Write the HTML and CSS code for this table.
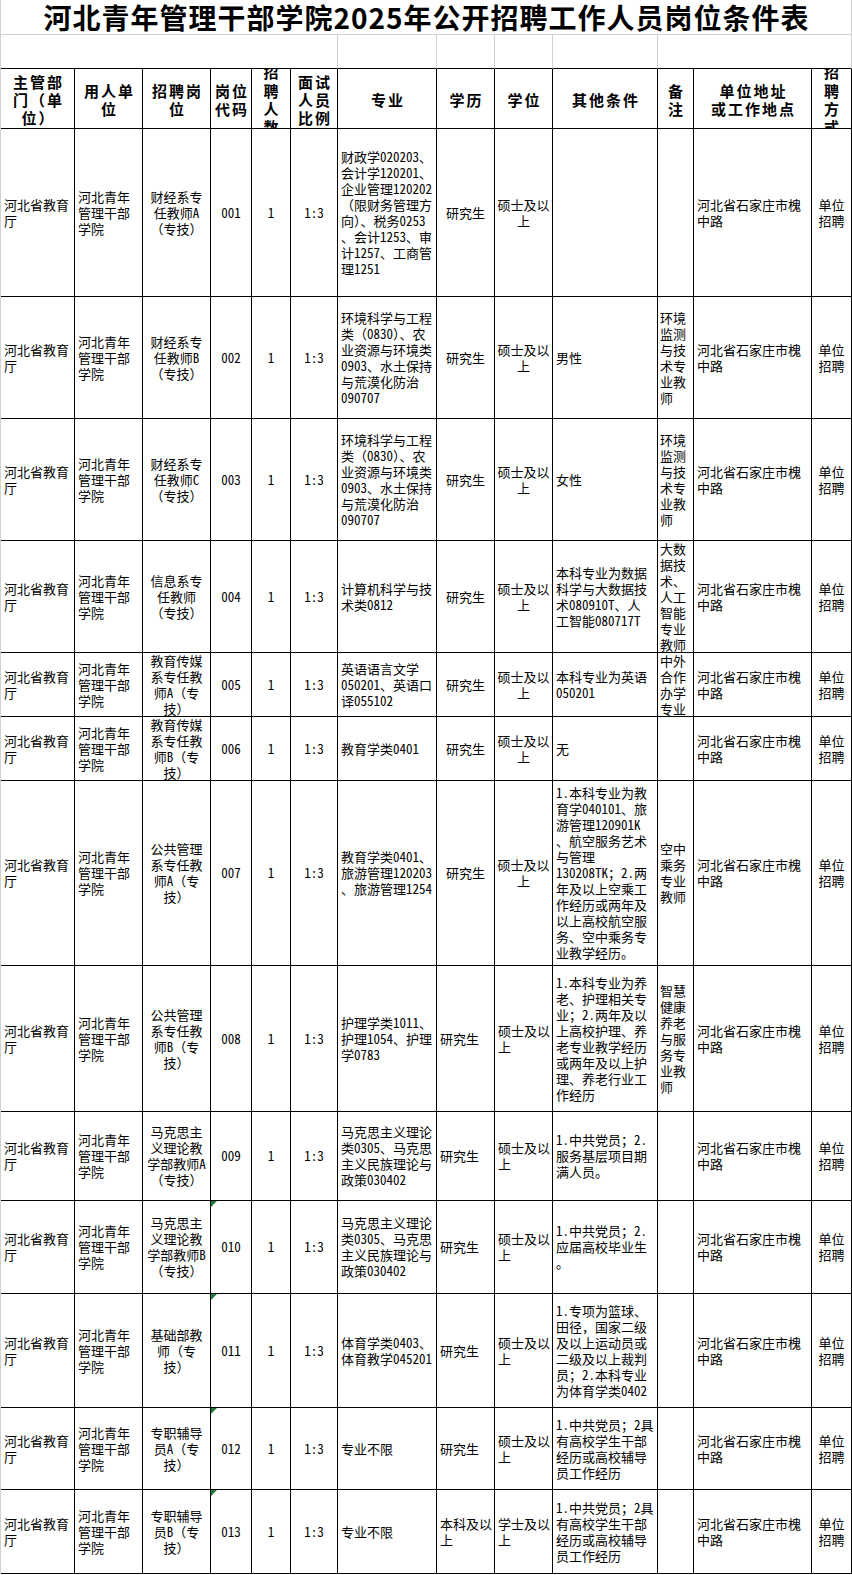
FILE: index.html
```html
<!DOCTYPE html>
<html lang="zh-CN">
<head>
<meta charset="utf-8">
<title>河北青年管理干部学院2025年公开招聘工作人员岗位条件表</title>
<link rel="stylesheet" href="styles.css">
</head>
<body>
<div class="sheet">
  <div class="title">河北青年管理干部学院2025年公开招聘工作人员岗位条件表</div>

  <div class="blank span6"></div>
  <div class="blank"></div>
  <div class="blank"></div>
  <div class="blank"></div>
  <div class="blank"></div>
  <div class="blank span3"></div>

  <div class="c m h"><span>主管部<br>门（单<br>位）</span></div>
  <div class="c m h"><span>用人单<br>位</span></div>
  <div class="c m h"><span>招聘岗<br>位</span></div>
  <div class="c m h"><span>岗位<br>代码</span></div>
  <div class="c m h"><span>招<br>聘<br>人<br>数</span></div>
  <div class="c m h"><span>面试<br>人员<br>比例</span></div>
  <div class="c m h"><span>专业</span></div>
  <div class="c m h"><span>学历</span></div>
  <div class="c m h"><span>学位</span></div>
  <div class="c m h"><span>其他条件</span></div>
  <div class="c m h"><span>备<br>注</span></div>
  <div class="c m h"><span>单位地址<br>或工作地点</span></div>
  <div class="c m h"><span>招<br>聘<br>方<br>式</span></div>

  <!-- 001 -->
  <div class="c"><span>河北省教育<br>厅</span></div>
  <div class="c"><span>河北青年<br>管理干部<br>学院</span></div>
  <div class="c m"><span>财经系专<br>任教师A<br>（专技）</span></div>
  <div class="c m"><span>001</span></div>
  <div class="c m"><span>1</span></div>
  <div class="c m"><span>1:3</span></div>
  <div class="c"><span>财政学020203、<br>会计学120201、<br>企业管理120202<br>（限财务管理方<br>向）、税务0253<br>、会计1253、审<br>计1257、工商管<br>理1251</span></div>
  <div class="c m"><span>研究生</span></div>
  <div class="c m"><span>硕士及以<br>上</span></div>
  <div class="c"><span></span></div>
  <div class="c n"><span></span></div>
  <div class="c"><span>河北省石家庄市槐<br>中路</span></div>
  <div class="c m"><span>单位<br>招聘</span></div>

  <!-- 002 -->
  <div class="c"><span>河北省教育<br>厅</span></div>
  <div class="c"><span>河北青年<br>管理干部<br>学院</span></div>
  <div class="c m"><span>财经系专<br>任教师B<br>（专技）</span></div>
  <div class="c m"><span>002</span></div>
  <div class="c m"><span>1</span></div>
  <div class="c m"><span>1:3</span></div>
  <div class="c"><span>环境科学与工程<br>类（0830）、农<br>业资源与环境类<br>0903、水土保持<br>与荒漠化防治<br>090707</span></div>
  <div class="c m"><span>研究生</span></div>
  <div class="c m"><span>硕士及以<br>上</span></div>
  <div class="c"><span>男性</span></div>
  <div class="c n"><span>环境<br>监测<br>与技<br>术专<br>业教<br>师</span></div>
  <div class="c"><span>河北省石家庄市槐<br>中路</span></div>
  <div class="c m"><span>单位<br>招聘</span></div>

  <!-- 003 -->
  <div class="c"><span>河北省教育<br>厅</span></div>
  <div class="c"><span>河北青年<br>管理干部<br>学院</span></div>
  <div class="c m"><span>财经系专<br>任教师C<br>（专技）</span></div>
  <div class="c m"><span>003</span></div>
  <div class="c m"><span>1</span></div>
  <div class="c m"><span>1:3</span></div>
  <div class="c"><span>环境科学与工程<br>类（0830）、农<br>业资源与环境类<br>0903、水土保持<br>与荒漠化防治<br>090707</span></div>
  <div class="c m"><span>研究生</span></div>
  <div class="c m"><span>硕士及以<br>上</span></div>
  <div class="c"><span>女性</span></div>
  <div class="c n"><span>环境<br>监测<br>与技<br>术专<br>业教<br>师</span></div>
  <div class="c"><span>河北省石家庄市槐<br>中路</span></div>
  <div class="c m"><span>单位<br>招聘</span></div>

  <!-- 004 -->
  <div class="c"><span>河北省教育<br>厅</span></div>
  <div class="c"><span>河北青年<br>管理干部<br>学院</span></div>
  <div class="c m"><span>信息系专<br>任教师<br>（专技）</span></div>
  <div class="c m"><span>004</span></div>
  <div class="c m"><span>1</span></div>
  <div class="c m"><span>1:3</span></div>
  <div class="c"><span>计算机科学与技<br>术类0812</span></div>
  <div class="c m"><span>研究生</span></div>
  <div class="c m"><span>硕士及以<br>上</span></div>
  <div class="c"><span>本科专业为数据<br>科学与大数据技<br>术080910T、人<br>工智能080717T</span></div>
  <div class="c n"><span>大数<br>据技<br>术、<br>人工<br>智能<br>专业<br>教师</span></div>
  <div class="c"><span>河北省石家庄市槐<br>中路</span></div>
  <div class="c m"><span>单位<br>招聘</span></div>

  <!-- 005 -->
  <div class="c"><span>河北省教育<br>厅</span></div>
  <div class="c"><span>河北青年<br>管理干部<br>学院</span></div>
  <div class="c m"><span>教育传媒<br>系专任教<br>师A（专<br>技）</span></div>
  <div class="c m"><span>005</span></div>
  <div class="c m"><span>1</span></div>
  <div class="c m"><span>1:3</span></div>
  <div class="c"><span>英语语言文学<br>050201、英语口<br>译055102</span></div>
  <div class="c m"><span>研究生</span></div>
  <div class="c m"><span>硕士及以<br>上</span></div>
  <div class="c"><span>本科专业为英语<br>050201</span></div>
  <div class="c n"><span>中外<br>合作<br>办学<br>专业</span></div>
  <div class="c"><span>河北省石家庄市槐<br>中路</span></div>
  <div class="c m"><span>单位<br>招聘</span></div>

  <!-- 006 -->
  <div class="c"><span>河北省教育<br>厅</span></div>
  <div class="c"><span>河北青年<br>管理干部<br>学院</span></div>
  <div class="c m"><span>教育传媒<br>系专任教<br>师B（专<br>技）</span></div>
  <div class="c m"><span>006</span></div>
  <div class="c m"><span>1</span></div>
  <div class="c m"><span>1:3</span></div>
  <div class="c"><span>教育学类0401</span></div>
  <div class="c m"><span>研究生</span></div>
  <div class="c m"><span>硕士及以<br>上</span></div>
  <div class="c"><span>无</span></div>
  <div class="c n"><span></span></div>
  <div class="c"><span>河北省石家庄市槐<br>中路</span></div>
  <div class="c m"><span>单位<br>招聘</span></div>

  <!-- 007 -->
  <div class="c"><span>河北省教育<br>厅</span></div>
  <div class="c"><span>河北青年<br>管理干部<br>学院</span></div>
  <div class="c m"><span>公共管理<br>系专任教<br>师A（专<br>技）</span></div>
  <div class="c m"><span>007</span></div>
  <div class="c m"><span>1</span></div>
  <div class="c m"><span>1:3</span></div>
  <div class="c"><span>教育学类0401、<br>旅游管理120203<br>、旅游管理1254</span></div>
  <div class="c m"><span>研究生</span></div>
  <div class="c m"><span>硕士及以<br>上</span></div>
  <div class="c"><span>1.本科专业为教<br>育学040101、旅<br>游管理120901K<br>、航空服务艺术<br>与管理<br>130208TK；2.两<br>年及以上空乘工<br>作经历或两年及<br>以上高校航空服<br>务、空中乘务专<br>业教学经历。</span></div>
  <div class="c n"><span>空中<br>乘务<br>专业<br>教师</span></div>
  <div class="c"><span>河北省石家庄市槐<br>中路</span></div>
  <div class="c m"><span>单位<br>招聘</span></div>

  <!-- 008 -->
  <div class="c"><span>河北省教育<br>厅</span></div>
  <div class="c"><span>河北青年<br>管理干部<br>学院</span></div>
  <div class="c m"><span>公共管理<br>系专任教<br>师B（专<br>技）</span></div>
  <div class="c m"><span>008</span></div>
  <div class="c m"><span>1</span></div>
  <div class="c m"><span>1:3</span></div>
  <div class="c"><span>护理学类1011、<br>护理1054、护理<br>学0783</span></div>
  <div class="c"><span>研究生</span></div>
  <div class="c"><span>硕士及以<br>上</span></div>
  <div class="c"><span>1.本科专业为养<br>老、护理相关专<br>业；2.两年及以<br>上高校护理、养<br>老专业教学经历<br>或两年及以上护<br>理、养老行业工<br>作经历</span></div>
  <div class="c n"><span>智慧<br>健康<br>养老<br>与服<br>务专<br>业教<br>师</span></div>
  <div class="c"><span>河北省石家庄市槐<br>中路</span></div>
  <div class="c m"><span>单位<br>招聘</span></div>

  <!-- 009 -->
  <div class="c"><span>河北省教育<br>厅</span></div>
  <div class="c"><span>河北青年<br>管理干部<br>学院</span></div>
  <div class="c m"><span>马克思主<br>义理论教<br>学部教师A<br>（专技）</span></div>
  <div class="c m"><span>009</span></div>
  <div class="c m"><span>1</span></div>
  <div class="c m"><span>1:3</span></div>
  <div class="c"><span>马克思主义理论<br>类0305、马克思<br>主义民族理论与<br>政策030402</span></div>
  <div class="c"><span>研究生</span></div>
  <div class="c"><span>硕士及以<br>上</span></div>
  <div class="c"><span>1.中共党员；2.<br>服务基层项目期<br>满人员。</span></div>
  <div class="c n"><span></span></div>
  <div class="c"><span>河北省石家庄市槐<br>中路</span></div>
  <div class="c m"><span>单位<br>招聘</span></div>

  <!-- 010 -->
  <div class="c"><span>河北省教育<br>厅</span></div>
  <div class="c"><span>河北青年<br>管理干部<br>学院</span></div>
  <div class="c m"><span>马克思主<br>义理论教<br>学部教师B<br>（专技）</span></div>
  <div class="c m f"><span>010</span></div>
  <div class="c m"><span>1</span></div>
  <div class="c m"><span>1:3</span></div>
  <div class="c"><span>马克思主义理论<br>类0305、马克思<br>主义民族理论与<br>政策030402</span></div>
  <div class="c"><span>研究生</span></div>
  <div class="c"><span>硕士及以<br>上</span></div>
  <div class="c"><span>1.中共党员；2.<br>应届高校毕业生<br>。</span></div>
  <div class="c n"><span></span></div>
  <div class="c"><span>河北省石家庄市槐<br>中路</span></div>
  <div class="c m"><span>单位<br>招聘</span></div>

  <!-- 011 -->
  <div class="c"><span>河北省教育<br>厅</span></div>
  <div class="c"><span>河北青年<br>管理干部<br>学院</span></div>
  <div class="c m"><span>基础部教<br>师（专<br>技）</span></div>
  <div class="c m f"><span>011</span></div>
  <div class="c m"><span>1</span></div>
  <div class="c m"><span>1:3</span></div>
  <div class="c"><span>体育学类0403、<br>体育教学045201</span></div>
  <div class="c"><span>研究生</span></div>
  <div class="c"><span>硕士及以<br>上</span></div>
  <div class="c"><span>1.专项为篮球、<br>田径，国家二级<br>及以上运动员或<br>二级及以上裁判<br>员；2.本科专业<br>为体育学类0402</span></div>
  <div class="c n"><span></span></div>
  <div class="c"><span>河北省石家庄市槐<br>中路</span></div>
  <div class="c m"><span>单位<br>招聘</span></div>

  <!-- 012 -->
  <div class="c"><span>河北省教育<br>厅</span></div>
  <div class="c"><span>河北青年<br>管理干部<br>学院</span></div>
  <div class="c m"><span>专职辅导<br>员A（专<br>技）</span></div>
  <div class="c m f"><span>012</span></div>
  <div class="c m"><span>1</span></div>
  <div class="c m"><span>1:3</span></div>
  <div class="c"><span>专业不限</span></div>
  <div class="c"><span>研究生</span></div>
  <div class="c"><span>硕士及以<br>上</span></div>
  <div class="c"><span>1.中共党员；2具<br>有高校学生干部<br>经历或高校辅导<br>员工作经历</span></div>
  <div class="c n"><span></span></div>
  <div class="c"><span>河北省石家庄市槐<br>中路</span></div>
  <div class="c m"><span>单位<br>招聘</span></div>

  <!-- 013 -->
  <div class="c"><span>河北省教育<br>厅</span></div>
  <div class="c"><span>河北青年<br>管理干部<br>学院</span></div>
  <div class="c m"><span>专职辅导<br>员B（专<br>技）</span></div>
  <div class="c m f"><span>013</span></div>
  <div class="c m"><span>1</span></div>
  <div class="c m"><span>1:3</span></div>
  <div class="c"><span>专业不限</span></div>
  <div class="c"><span>本科及以<br>上</span></div>
  <div class="c"><span>学士及以<br>上</span></div>
  <div class="c"><span>1.中共党员；2具<br>有高校学生干部<br>经历或高校辅导<br>员工作经历</span></div>
  <div class="c n"><span></span></div>
  <div class="c"><span>河北省石家庄市槐<br>中路</span></div>
  <div class="c m"><span>单位<br>招聘</span></div>
</div>
</body>
</html>
```

FILE: styles.css
```css
* {
  box-sizing: border-box;
}

html,
body {
  margin: 0;
  padding: 0;
  background: #ffffff;
}

body {
  font-family: "Noto Sans Mono CJK SC", "Noto Sans CJK SC", sans-serif;
  color: #000000;
}

.sheet {
  display: grid;
  width: 852px;
  border-left: 1px solid #d0d0d0;
  grid-template-columns: 74px 68px 68px 41px 39px 47px 99px 58px 58px 105px 36px 118px 40px;
  grid-template-rows: 35px 34px 60px 168px 122px 122px 112px 64px 64px 185px 146px 89px 93px 114px 82px 84px;
}

.title {
  grid-column: 1 / -1;
  display: flex;
  align-items: center;
  justify-content: center;
  border-right: 1px solid #d0d0d0;
  border-bottom: 1px solid #d0d0d0;
  font-family: "Noto Sans CJK SC", sans-serif;
  font-weight: 700;
  font-size: 28px;
  line-height: 34px;
  letter-spacing: 1px;
  padding-left: 1px;
  white-space: nowrap;
}

.blank {
  border-right: 1px solid #d0d0d0;
  border-bottom: 1px solid #000000;
}

.span6 {
  grid-column: span 6;
}

.span3 {
  grid-column: span 3;
}

.c {
  position: relative;
  display: flex;
  align-items: center;
  overflow: hidden;
  border-right: 1px solid #000000;
  border-bottom: 1px solid #000000;
  padding: 0 0 0 3px;
  font-size: 13px;
  line-height: 16px;
  white-space: nowrap;
}

.c > span {
  display: block;
}

.m {
  justify-content: center;
  text-align: center;
  padding: 0;
}

.n {
  padding-left: 2px;
}

.h {
  font-family: "Noto Sans CJK SC", sans-serif;
  font-weight: 700;
  font-size: 15px;
  line-height: 18.3px;
  letter-spacing: 2px;
  padding: 3px 0 0 2px;
}

.f::before {
  content: "";
  position: absolute;
  top: 0;
  left: 0;
  width: 0;
  height: 0;
  border-top: 6px solid #1f7a3a;
  border-right: 6px solid transparent;
}
```
